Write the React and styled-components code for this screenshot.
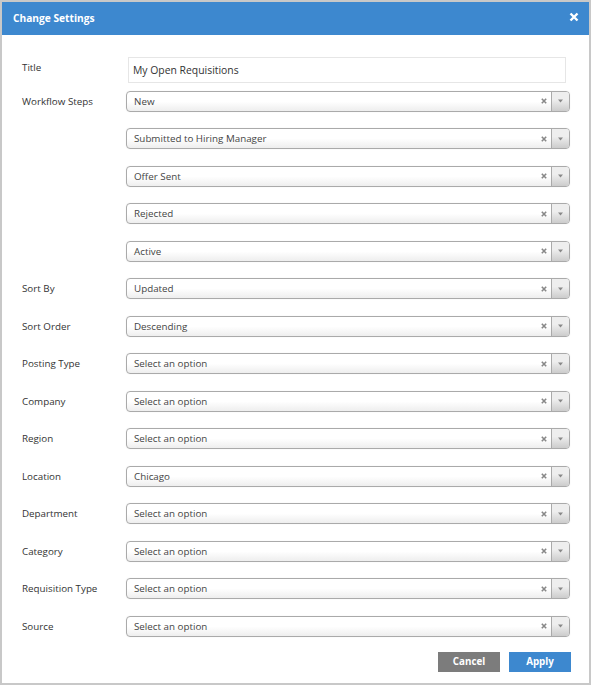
import React from "react";
import styled, { createGlobalStyle } from "styled-components";

const GlobalStyle = createGlobalStyle`
  html, body {
    margin: 0;
    padding: 0;
    background: #ffffff;
  }
  body {
    font-family: "Open Sans", "Liberation Sans", sans-serif;
  }
`;

const Dialog = styled.div`
  width: 591px;
  height: 685px;
  box-sizing: border-box;
  border: 2px solid #c8c8c8;
  display: flex;
  flex-direction: column;
  background: #fff;
`;

const Header = styled.div`
  height: 33px;
  background: #3d88cf;
  display: flex;
  align-items: center;
  justify-content: space-between;
  padding: 0 9px 0 11px;
  flex-shrink: 0;
`;

const HeaderTitle = styled.h1`
  margin: 0;
  font-size: 10.2px;
  font-weight: 700;
  color: #fff;
  margin-top: -2px;
`;

const CloseButton = styled.button`
  border: 0;
  padding: 0;
  background: none;
  width: 12px;
  height: 12px;
  display: flex;
  align-items: center;
  justify-content: center;
  margin-top: -4px;
  cursor: pointer;
`;

const Body = styled.div`
  padding: 22px 18px 0 20px;
  display: flex;
  flex-direction: column;
  gap: 16.5px;
`;

const Row = styled.div`
  display: flex;
  align-items: flex-start;
  margin-bottom: ${(p) => p.$after || 0}px;
`;

const Label = styled.label`
  width: 104px;
  flex-shrink: 0;
  font-size: 9.8px;
  color: #333;
  line-height: ${(p) => p.$lh || 21}px;
`;

const Controls = styled.div`
  display: flex;
  flex-direction: column;
  gap: 16.5px;
  flex: 1;
`;

const TextInput = styled.input`
  width: 438px;
  height: 26px;
  box-sizing: border-box;
  margin-left: 2px;
  border: 1px solid #e6e6e6;
  padding: 0 4px;
  font-family: inherit;
  font-size: 10.4px;
  color: #333;
  outline: none;
`;

const Select = styled.div`
  width: 444px;
  height: 21px;
  box-sizing: border-box;
  border: 1px solid #aaa;
  border-radius: 4px;
  background: linear-gradient(to top, #eeeeee 0%, #ffffff 50%);
  display: flex;
  align-items: center;
  overflow: hidden;
  box-shadow: 0 0 2px rgba(0, 0, 0, 0.05);
`;

const SelectValue = styled.span`
  flex: 1;
  padding-left: 7px;
  font-size: 9.8px;
  color: #444;
  white-space: nowrap;
`;

const Clear = styled.span`
  width: 10px;
  display: flex;
  justify-content: center;
  margin-right: 2px;
`;

const Arrow = styled.span`
  width: 17px;
  align-self: stretch;
  border-left: 1px solid #aaa;
  background: linear-gradient(to top, #cccccc 0%, #eeeeee 60%);
  display: flex;
  align-items: center;
  justify-content: center;
`;

const Footer = styled.div`
  display: flex;
  justify-content: flex-end;
  gap: 9px;
  padding: 15px 18px 0 0;
`;

const Button = styled.button`
  width: 62px;
  height: 20px;
  border: 0;
  padding: 0;
  font-family: inherit;
  font-size: 9.8px;
  font-weight: 700;
  color: #fff;
  background: ${(p) => (p.$primary ? "#3d88cf" : "#7c7c7c")};
  cursor: pointer;
`;

const SelectBox = ({ value }) => (
  <Select>
    <SelectValue>{value}</SelectValue>
    <Clear>
      <svg width="6" height="6" viewBox="0 0 6 6">
        <path d="M0.8 0.8L5.2 5.2M5.2 0.8L0.8 5.2" stroke="#888" strokeWidth="1.6" />
      </svg>
    </Clear>
    <Arrow>
      <svg width="5" height="4" viewBox="0 0 5 4">
        <path d="M0 0.5H5L2.5 3.5Z" fill="#888" />
      </svg>
    </Arrow>
  </Select>
);

const fields = [
  ["Sort By", "Updated"],
  ["Sort Order", "Descending"],
  ["Posting Type", "Select an option"],
  ["Company", "Select an option"],
  ["Region", "Select an option"],
  ["Location", "Chicago"],
  ["Department", "Select an option"],
  ["Category", "Select an option"],
  ["Requisition Type", "Select an option"],
  ["Source", "Select an option"],
];

const steps = ["New", "Submitted to Hiring Manager", "Offer Sent", "Rejected", "Active"];

export default function App() {
  return (
    <>
      <GlobalStyle />
      <Dialog>
        <Header>
          <HeaderTitle>Change Settings</HeaderTitle>
          <CloseButton aria-label="Close">
            <svg width="10" height="10" viewBox="0 0 10 10">
              <path d="M1.5 1.5L8.5 8.5M8.5 1.5L1.5 8.5" stroke="#fff" strokeWidth="2.4" />
            </svg>
          </CloseButton>
        </Header>
        <Body>
          <Row $after={-9}>
            <Label $lh={22}>Title</Label>
            <TextInput defaultValue="My Open Requisitions" />
          </Row>
          <Row>
            <Label>Workflow Steps</Label>
            <Controls>
              {steps.map((s) => (
                <SelectBox key={s} value={s} />
              ))}
            </Controls>
          </Row>
          {fields.map(([label, value]) => (
            <Row key={label}>
              <Label>{label}</Label>
              <SelectBox value={value} />
            </Row>
          ))}
        </Body>
        <Footer>
          <Button>Cancel</Button>
          <Button $primary>Apply</Button>
        </Footer>
      </Dialog>
    </>
  );
}
